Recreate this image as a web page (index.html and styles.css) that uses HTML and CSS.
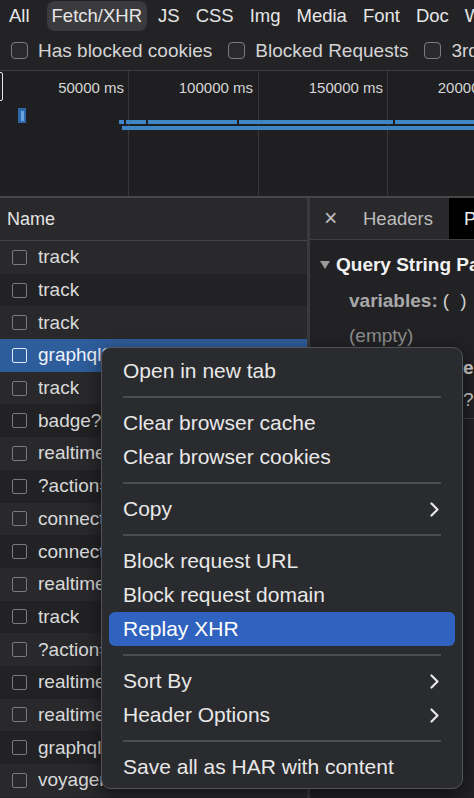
FILE: index.html
```html
<!DOCTYPE html>
<html lang="en">
<head>
<meta charset="utf-8">
<title>Network</title>
<link rel="stylesheet" href="styles.css">
</head>
<body>
<div class="filters">
  <span class="f f-first">All</span>
  <span class="f f-on">Fetch/XHR</span>
  <span class="f">JS</span>
  <span class="f">CSS</span>
  <span class="f">Img</span>
  <span class="f">Media</span>
  <span class="f">Font</span>
  <span class="f">Doc</span>
  <span class="f">WS</span>
</div>
<div class="filters2">
  <span class="cb"></span><span class="cbl">Has blocked cookies</span>
  <span class="cb"></span><span class="cbl">Blocked Requests</span>
  <span class="cb"></span><span class="cbl">3rd-party requests</span>
</div>
<div class="timeline">
  <div class="tcells">
    <div class="tcell c1"><span>50000 ms</span></div>
    <div class="tcell c2"><span>100000 ms</span></div>
    <div class="tcell c3"><span>150000 ms</span></div>
    <div class="tcell c4"><span>200000 ms</span></div>
  </div>
  <div class="handle"></div>
  <div class="bar small"><span class="small-in"></span></div>
  <div class="bar long1"><i style="width:5px"></i><i style="width:20px"></i><i style="width:89px"></i><i style="width:154px"></i><i style="width:90px"></i></div>
  <div class="bar long2"></div>
</div>
<div class="main">
  <div class="list">
    <div class="list-head">Name</div>
    <div class="row"><span class="rcb"></span><span class="rn">track</span></div>
    <div class="row"><span class="rcb"></span><span class="rn">track</span></div>
    <div class="row"><span class="rcb"></span><span class="rn">track</span></div>
    <div class="row sel"><span class="rcb"></span><span class="rn">graphql?queryId=voyager</span></div>
    <div class="row"><span class="rcb"></span><span class="rn">track</span></div>
    <div class="row"><span class="rcb"></span><span class="rn">badge?action=read</span></div>
    <div class="row"><span class="rcb"></span><span class="rn">realtime</span></div>
    <div class="row"><span class="rcb"></span><span class="rn">?action=execute</span></div>
    <div class="row"><span class="rcb"></span><span class="rn">connect</span></div>
    <div class="row"><span class="rcb"></span><span class="rn">connect</span></div>
    <div class="row"><span class="rcb"></span><span class="rn">realtime</span></div>
    <div class="row"><span class="rcb"></span><span class="rn">track</span></div>
    <div class="row"><span class="rcb"></span><span class="rn">?action=execute</span></div>
    <div class="row"><span class="rcb"></span><span class="rn">realtime</span></div>
    <div class="row"><span class="rcb"></span><span class="rn">realtime</span></div>
    <div class="row"><span class="rcb"></span><span class="rn">graphql</span></div>
    <div class="row"><span class="rcb"></span><span class="rn">voyager</span></div>
  </div>
  <div class="divider"></div>
  <div class="detail">
    <div class="tabs">
      <span class="close">×</span>
      <span class="tab">Headers</span>
      <span class="tab tab-on">Payload</span>
    </div>
    <div class="dbody">
      <div class="sec"><span class="tri"></span>Query String Parameters</div>
      <div class="kv"><b>variables:</b> <span class="par">( )</span></div>
      <div class="empty">(empty)</div>
      <div class="peek p1">e<span class="blk"></span></div>
      <div class="peek p2">?1</div>
    </div>
  </div>
</div>

<div class="menu">
  <div class="mi">Open in new tab</div>
  <div class="ms"></div>
  <div class="mi">Clear browser cache</div>
  <div class="mi">Clear browser cookies</div>
  <div class="ms"></div>
  <div class="mi">Copy<svg class="chev" viewBox="0 0 9 15"><polyline points="1.5,1.5 7.5,7.5 1.5,13.5"/></svg></div>
  <div class="ms"></div>
  <div class="mi">Block request URL</div>
  <div class="mi">Block request domain</div>
  <div class="mi mi-on">Replay XHR</div>
  <div class="ms"></div>
  <div class="mi">Sort By<svg class="chev" viewBox="0 0 9 15"><polyline points="1.5,1.5 7.5,7.5 1.5,13.5"/></svg></div>
  <div class="mi">Header Options<svg class="chev" viewBox="0 0 9 15"><polyline points="1.5,1.5 7.5,7.5 1.5,13.5"/></svg></div>
  <div class="ms"></div>
  <div class="mi">Save all as HAR with content</div>
</div>
</body>
</html>
```

FILE: styles.css
```css
html, body {
  margin: 0;
  padding: 0;
}
body {
  width: 474px;
  height: 798px;
  overflow: hidden;
  position: relative;
  background: #232326;
  color: #e3e3e3;
  font-family: "Liberation Sans", Arial, sans-serif;
}

/* filter bar */
.filters {
  height: 31px;
  display: flex;
  align-items: center;
  gap: 16px;
  padding-left: 9px;
  font-size: 18.5px;
  white-space: nowrap;
  overflow: hidden;
  color: #e6e6e6;
}
.f { flex: none; }
.f-first { margin-right: 6px; }
.f-on {
  height: 30px;
  display: flex;
  align-items: center;
  padding: 0 5px;
  margin: 0 -5px;
  background: #3b3b3e;
  border-radius: 8px;
}
.filters2 {
  height: 39px;
  display: flex;
  align-items: center;
  padding-left: 11px;
  font-size: 19px;
  white-space: nowrap;
  overflow: hidden;
  color: #d4d4d4;
  border-bottom: 1px solid #3b3b3e;
}
.cb {
  flex: none;
  width: 15px;
  height: 15px;
  border: 1.5px solid #7c7c7f;
  border-radius: 4px;
  background: #2a2a2d;
  margin-right: 10px;
}
.cbl { flex: none; margin-right: 16px; }

/* timeline */
.timeline {
  height: 125px;
  position: relative;
  background: #1f1f22;
  border-bottom: 2px solid #464649;
  overflow: hidden;
}
.tcells {
  display: flex;
  height: 100%;
}
.tcell {
  flex: none;
  height: 100%;
  border-right: 1px solid #38383b;
  box-sizing: border-box;
  text-align: right;
  padding-top: 8px;
  font-size: 15px;
  line-height: 17px;
  color: #d6d6d6;
  white-space: nowrap;
}
.c1 { width: 129px; padding-right: 4px; }
.c2 { width: 130px; padding-right: 5px; }
.c3 { width: 129px; padding-right: 4px; }
.c4 { width: 130px; padding-right: 5px; }
.handle {
  position: absolute;
  left: -6px;
  top: 1px;
  width: 7px;
  height: 27px;
  border: 1.5px solid #e6e6e6;
  border-radius: 2px;
  background: #1f1f22;
}
.bar {
  position: absolute;
  background: #3f86c6;
}
.small {
  left: 18px;
  top: 37px;
  width: 8px;
  height: 15px;
  background: #2d68a8;
  display: flex;
  justify-content: center;
  align-items: center;
}
.small-in {
  width: 3px;
  height: 10px;
  background: #67a5dc;
}
.long1 {
  left: 119px;
  top: 49px;
  width: 360px;
  height: 4px;
  display: flex;
  gap: 2px;
  background: transparent;
}
.long1 i {
  flex: none;
  height: 100%;
  background: #3f86c6;
}
.long1 i:last-child { flex: 1; }
.long2 {
  left: 122px;
  top: 55px;
  width: 360px;
  height: 4px;
}

/* main area */
.main {
  display: flex;
  height: 600px;
}
.list {
  width: 307px;
  flex: none;
  background: #232326;
  overflow: hidden;
}
.list-head {
  height: 42px;
  display: flex;
  align-items: center;
  padding-left: 7px;
  font-size: 18px;
  color: #e3e3e3;
  background: #29292c;
  border-bottom: 1px solid #464649;
}
.row {
  height: 32.7px;
  display: flex;
  align-items: center;
  padding-left: 12px;
  font-size: 19px;
  color: #d9d9d9;
  white-space: nowrap;
  overflow: hidden;
}
.row:nth-child(even) { background: #29292c; }
.row:nth-child(odd) { background: #222225; }
.row.sel { background: #2e5d9b; color: #eef3fb; }
.rcb {
  flex: none;
  width: 13px;
  height: 13px;
  border: 1.5px solid #7a7a7d;
  border-radius: 2px;
  margin-right: 11px;
}
.sel .rcb { border-color: #dce8f7; }
.rn { overflow: hidden; }

.divider {
  width: 3px;
  flex: none;
  background: #3a3a3d;
}
.detail {
  flex: 1;
  min-width: 0;
  background: #222225;
  overflow: hidden;
}
.tabs {
  height: 41px;
  display: flex;
  align-items: stretch;
  background: #29292c;
  border-bottom: 1px solid #3f3f42;
  white-space: nowrap;
}
.close {
  flex: none;
  display: flex;
  align-items: center;
  padding-left: 14px;
  width: 38px;
  box-sizing: border-box;
  font-size: 23px;
  color: #bdbdbd;
}
.tab {
  flex: none;
  display: flex;
  align-items: center;
  padding: 0 16px 0 15px;
  font-size: 18.5px;
  color: #bcbcbc;
}
.tab-on {
  background: #000;
  color: #f0f0f0;
  padding-left: 15px;
}
.dbody {
  padding-top: 13px;
  white-space: nowrap;
}
.sec {
  height: 24px;
  display: flex;
  align-items: center;
  padding-left: 10px;
  font-size: 19px;
  font-weight: bold;
  color: #f2f2f2;
}
.tri {
  flex: none;
  width: 0;
  height: 0;
  border-left: 5px solid transparent;
  border-right: 5px solid transparent;
  border-top: 8px solid #9a9a9a;
  margin-right: 6px;
}
.kv {
  height: 24px;
  margin-top: 12px;
  display: flex;
  align-items: center;
  padding-left: 39px;
  font-size: 19px;
  color: #a8a8a8;
}
.kv b { margin-right: 5px; }
.par { color: #cfcfcf; letter-spacing: 3px; }
.empty {
  height: 24px;
  margin-top: 11px;
  display: flex;
  align-items: center;
  padding-left: 39px;
  font-size: 19px;
  color: #8d8d8d;
}
.peek {
  height: 24px;
  display: flex;
  align-items: center;
  padding-left: 153px;
  font-size: 19px;
  color: #d0d0d0;
}
.p1 { margin-top: 8px; font-weight: bold; }
.blk {
  display: inline-block;
  width: 6px;
  height: 12px;
  background: #d8d8d8;
  margin-left: 1px;
}
.p2 {
  margin-top: 8px;
  padding-bottom: 6px;
  border-bottom: 1px solid #3f3f42;
}

/* context menu overlay */
.menu {
  position: absolute;
  left: 101px;
  top: 347px;
  width: 362px;
  box-sizing: border-box;
  padding: 6px 7px 4px;
  background: #2a2b2e;
  border: 1px solid #525357;
  border-radius: 10px;
  box-shadow: 0 6px 20px rgba(0, 0, 0, 0.55);
}
.mi {
  height: 34px;
  display: flex;
  align-items: center;
  justify-content: space-between;
  padding: 0 16px 0 14px;
  font-size: 21px;
  color: #e8e8e8;
  border-radius: 6px;
  white-space: nowrap;
}
.mi-on {
  background: #3063bf;
  color: #fff;
}
.ms {
  height: 18px;
  display: flex;
  align-items: center;
  padding: 0 14px;
}
.ms::before {
  content: "";
  flex: 1;
  height: 1.5px;
  background: #4b4c50;
}
.chev {
  flex: none;
  width: 9px;
  height: 15px;
  fill: none;
  stroke: #e8e8e8;
  stroke-width: 2.2;
  stroke-linecap: round;
  stroke-linejoin: round;
}
```
